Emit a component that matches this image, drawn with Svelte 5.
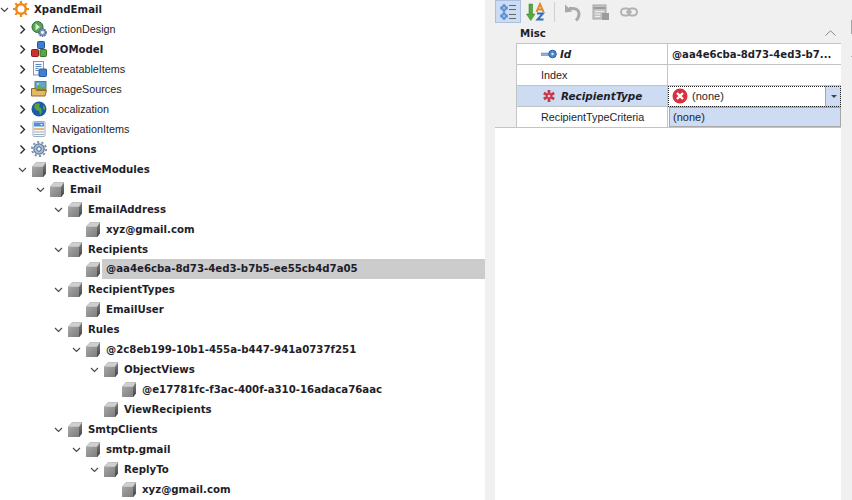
<script lang="ts">
  type Node = { level: number; label: string; icon: string; bold?: boolean; open?: boolean; leaf?: boolean; selected?: boolean };

  const nodes: Node[] = [
    { level: 0, label: "XpandEmail", icon: "sun", bold: true, open: true },
    { level: 1, label: "ActionDesign", icon: "action" },
    { level: 1, label: "BOModel", icon: "bo", bold: true },
    { level: 1, label: "CreatableItems", icon: "create" },
    { level: 1, label: "ImageSources", icon: "image" },
    { level: 1, label: "Localization", icon: "globe" },
    { level: 1, label: "NavigationItems", icon: "nav" },
    { level: 1, label: "Options", icon: "gear", bold: true },
    { level: 1, label: "ReactiveModules", icon: "cube", bold: true, open: true },
    { level: 2, label: "Email", icon: "cube", bold: true, open: true },
    { level: 3, label: "EmailAddress", icon: "cube", bold: true, open: true },
    { level: 4, label: "xyz@gmail.com", icon: "cube", bold: true, leaf: true },
    { level: 3, label: "Recipients", icon: "cube", bold: true, open: true },
    { level: 4, label: "@aa4e6cba-8d73-4ed3-b7b5-ee55cb4d7a05", icon: "cube", bold: true, leaf: true, selected: true },
    { level: 3, label: "RecipientTypes", icon: "cube", bold: true, open: true },
    { level: 4, label: "EmailUser", icon: "cube", bold: true, leaf: true },
    { level: 3, label: "Rules", icon: "cube", bold: true, open: true },
    { level: 4, label: "@2c8eb199-10b1-455a-b447-941a0737f251", icon: "cube", bold: true, open: true },
    { level: 5, label: "ObjectViews", icon: "cube", bold: true, open: true },
    { level: 6, label: "@e17781fc-f3ac-400f-a310-16adaca76aac", icon: "cube", bold: true, leaf: true },
    { level: 5, label: "ViewRecipients", icon: "cube", bold: true, leaf: true },
    { level: 3, label: "SmtpClients", icon: "cube", bold: true, open: true },
    { level: 4, label: "smtp.gmail", icon: "cube", bold: true, open: true },
    { level: 5, label: "ReplyTo", icon: "cube", bold: true, open: true },
    { level: 6, label: "xyz@gmail.com", icon: "cube", bold: true, leaf: true }
  ];
</script>

{#snippet treeIcon(name: string)}
  <svg class="icon" viewBox="0 0 16 16" width="16" height="16">
    {#if name === "sun"}
      <circle cx="8" cy="8" r="4.800" fill="none" stroke="#ee8a1c" stroke-width="2.600" />
      <path d="M8 0v3M8 13v3M0 8h3M13 8h3M2.300 2.300l2.200 2.200M11.500 11.500l2.200 2.200M2.300 13.700l2.200-2.200M11.500 4.500l2.200-2.200" stroke="#ee8a1c" stroke-width="2.200" />
    {:else if name === "action"}
      <circle cx="6.500" cy="6" r="5.500" fill="#5aa554" stroke="#2f6b35" />
      <path d="M4.500 2.500v7l4.500-3.500z" fill="#d8f0d0" />
      <circle cx="11.500" cy="11.500" r="3.600" fill="#7f9cc0" stroke="#56708f" stroke-width="1.600" stroke-dasharray="1.600 .7" />
      <circle cx="11.500" cy="11.500" r="1.400" fill="#fff" />
    {:else if name === "bo"}
      <rect x="6.500" y="0.500" width="7" height="7" rx="1" fill="#3f7fd0" stroke="#24528f" />
      <rect x="0.500" y="8.500" width="7" height="7" rx="1" fill="#c8322f" stroke="#842020" />
      <rect x="9" y="8.500" width="6.500" height="7" rx="1" fill="#58a83f" stroke="#3a7528" />
    {:else if name === "create"}
      <rect x="2.500" y="0.500" width="10" height="13.500" fill="#f4f8fd" stroke="#7d9cc4" />
      <path d="M4.500 3.500h6M4.500 5.500h6M4.500 7.500h3M4.500 9.500h3" stroke="#5f86bb" />
      <rect x="8" y="8" width="7.500" height="7.500" rx="1" fill="#3f80d0" stroke="#2a5a9c" />
    {:else if name === "image"}
      <rect x="4" y="0.500" width="11" height="8" fill="#5fa5d8" stroke="#6e7f60" />
      <path d="M5 8l3-4 3 3 2-2 2 3z" fill="#6ea83f" />
      <circle cx="7" cy="3" r="1" fill="#f4e27a" />
      <path d="M0.500 7.500h4l1 2h10l-1.500 5.500h-13.500z" fill="#e3b866" stroke="#94692b" />
    {:else if name === "globe"}
      <circle cx="8" cy="8" r="7.500" fill="#1e5aa8" />
      <path d="M4 3c2-1 4-1 5 0l-1 3 2 1 1 4-2 3-1-4-3-1-2-3z" fill="#5aa33c" />
      <path d="M12 4l2 2v3l-2-1z" fill="#5aa33c" />
    {:else if name === "nav"}
      <rect x="2" y="0.500" width="12" height="15" rx="1" fill="#f3f6fb" stroke="#9fb0c6" />
      <rect x="3" y="1.500" width="10" height="4" fill="#4e8fd6" />
      <path d="M9 3h3l-1.500 1.500z" fill="#fff" />
      <path d="M3 8h10" stroke="#e7a24a" stroke-width="1.500" />
      <path d="M3 11h10M3 13.500h10" stroke="#a4afbd" />
    {:else if name === "gear"}
      <circle cx="8" cy="8" r="5.200" fill="#aac0da" stroke="#5f7792" stroke-width="1.200" />
      <circle cx="8" cy="8" r="7" fill="none" stroke="#7f94ad" stroke-width="2" stroke-dasharray="2.200 2.200" />
      <circle cx="8" cy="8" r="2.200" fill="#fff" stroke="#3f5f88" />
    {:else}
      <defs>
        <linearGradient id="cube-front" x1="0" y1="0" x2="1" y2="1">
          <stop offset="0" stop-color="#a6a6a6" />
          <stop offset="1" stop-color="#7c7c7c" />
        </linearGradient>
        <linearGradient id="cube-side" x1="0" y1="0" x2="0" y2="1">
          <stop offset="0" stop-color="#7c7c7c" />
          <stop offset="1" stop-color="#444" />
        </linearGradient>
      </defs>
      <path d="M1 6 5 1.500h10L12 6z" fill="#cfcfcf" stroke="#9a9a9a" stroke-width=".5" />
      <path d="M12 6 15 1.500V12.500L12 16.500z" fill="url(#cube-side)" />
      <rect x="1" y="6" width="11" height="10.500" fill="url(#cube-front)" />
    {/if}
  </svg>
{/snippet}

<div class="screen">
  <section class="tree">
    {#each nodes as node}
      <div class="row" style="padding-left: {node.level * 18}px">
        <span class="toggle">
          {#if !node.leaf}
            <svg viewBox="0 0 9 9" width="9" height="9">
              {#if node.open}
                <path d="M1 3l3.500 3.500L8 3" fill="none" stroke="#4a4a4a" stroke-width="1.200" />
              {:else}
                <path d="M2.500 .5l4 4-4 4" fill="none" stroke="#222" stroke-width="1.300" />
              {/if}
            </svg>
          {/if}
        </span>
        {@render treeIcon(node.icon)}
        <span class="label" class:bold={node.bold} class:selected={node.selected}>{node.label}</span>
        {#if node.selected}
          <span class="selected-fill"></span>
        {/if}
      </div>
    {/each}
  </section>

  <section class="props">
    <span class="scroll-mark"></span>
    <span class="scroll-tick"></span>
    <div class="toolbar">
      <button class="tool active" aria-label="Categorized">
        <svg viewBox="0 0 20 20" width="20" height="20">
          <path d="M2.500 6h7M6 2.500v7M2.500 14h7M6 10.500v7" stroke="#2f6fc0" stroke-width="2.800" />
          <path d="M3.500 6h5M6 3.500v5M3.500 14h5M6 11.500v5" stroke="#bcd6f2" stroke-width=".9" />
          <path d="M11 3.500h7M11 7.500h7M11 12.500h7M11 16.500h7" stroke="#666" stroke-width="1.200" />
        </svg>
      </button>
      <button class="tool" aria-label="Alphabetical">
        <svg viewBox="0 0 20 20" width="20" height="20">
          <path d="M3 2h3.500v10H9l-4.250 6.500L.5 12H3z" fill="#58a83f" stroke="#3a8a2e" stroke-width=".6" />
          <path d="M10.500 10l3.500-8 3.500 8M11.500 7.500h5" stroke="#e08a2c" stroke-width="1.900" fill="none" />
          <path d="M11 11.500h6l-5.500 6h6" stroke="#2f6fc0" stroke-width="1.900" fill="none" />
        </svg>
      </button>
      <span class="sep"></span>
      <button class="tool" aria-label="Undo">
        <svg viewBox="0 0 20 20" width="20" height="20">
          <path d="M2 2.500v8l7.500-1z" fill="#a9a9a9" />
          <path d="M6 6.500h4c4 0 6 2.500 6 5.500 0 3-1.500 5-3 6.500" fill="none" stroke="#a9a9a9" stroke-width="3" />
        </svg>
      </button>
      <button class="tool" aria-label="Description">
        <svg viewBox="0 0 20 20" width="20" height="20">
          <rect x="2" y="3" width="13" height="14" fill="#c4c4c4" stroke="#a8a8a8" />
          <path d="M2.500 6h12" stroke="#9a9a9a" stroke-width="2" />
          <path d="M4 9.500h9M4 12h5M4 14.500h5" stroke="#eee" />
          <rect x="11" y="11" width="7" height="7" fill="#9c9c9c" />
        </svg>
      </button>
      <button class="tool" aria-label="Link">
        <svg viewBox="0 0 20 20" width="20" height="20">
          <rect x="2" y="6.500" width="9" height="7" rx="3.500" fill="none" stroke="#b2b2b2" stroke-width="2" />
          <rect x="9" y="6.500" width="9" height="7" rx="3.500" fill="none" stroke="#b2b2b2" stroke-width="2" />
          <path d="M7 10h6" stroke="#b2b2b2" stroke-width="1.500" />
        </svg>
      </button>
    </div>

    <div class="category">
      <span>Misc</span>
      <svg viewBox="0 0 11 6" width="11" height="6"><path d="M.5 5.500 5.500 .8l5 4.700" fill="none" stroke="#888" /></svg>
    </div>

    <div class="grid">
      <div class="name inset">
        <svg class="prop-icon" viewBox="0 0 16 10" width="16" height="10">
          <path d="M0 4h10v2.500H0z" fill="#8fb0d6" stroke="#6c8db4" stroke-width=".6" />
          <circle cx="11.500" cy="5" r="3.800" fill="#4a87cc" stroke="#2e5f9c" />
          <circle cx="11.500" cy="5" r="1.200" fill="#d8e8f8" />
        </svg>
        <b><i>Id</i></b>
      </div>
      <div class="value strong">@aa4e6cba-8d73-4ed3-b7...</div>

      <div class="name">Index</div>
      <div class="value"></div>

      <div class="name inset current">
        <svg class="prop-icon asterisk" viewBox="0 0 12 12" width="12" height="12">
          <path d="M6 0v12M.8 3l10.400 6M.8 9l10.400-6" stroke="#c9384a" stroke-width="2.800" />
          <circle cx="6" cy="6" r="1.300" fill="#f6d5d8" />
        </svg>
        <b><i>RecipientType</i></b>
      </div>
      <div class="value editor">
        <svg viewBox="0 0 16 16" width="16" height="16">
          <circle cx="8" cy="8" r="7.500" fill="#d9303f" />
          <path d="M5 5l6 6M11 5l-6 6" stroke="#fff" stroke-width="2.400" />
        </svg>
        <span class="editor-text">(none)</span>
        <span class="arrow"><i></i></span>
        <div class="dropdown">(none)</div>
      </div>

      <div class="name">RecipientTypeCriteria</div>
      <div class="value"></div>
    </div>

    <div class="empty"></div>
  </section>
</div>

<style>
  :global(body) {
    margin: 0;
    background: #fff;
  }
  .screen {
    display: flex;
    width: 852px;
    height: 500px;
    overflow: hidden;
    font-family: "Liberation Sans", Arial, sans-serif;
    font-size: 11px;
    color: #1e1e2a;
  }
  .tree {
    width: 485px;
    flex: none;
    background: #fff;
    overflow: hidden;
    margin-top: -1px;
  }
  .row {
    display: flex;
    align-items: center;
    height: 20px;
  }
  .toggle {
    width: 13px;
    display: flex;
    flex: none;
  }
  .icon {
    flex: none;
  }
  .label {
    margin-left: 5px;
    font-size: 10.8px;
    white-space: nowrap;
  }
  .label.bold {
    font-family: "DejaVu Sans", sans-serif;
    font-weight: 700;
    font-size: 10.2px;
  }
  .selected-fill {
    flex: 1;
    align-self: stretch;
    background: #ccc;
  }
  .label.selected {
    background: #ccc;
    align-self: stretch;
    line-height: 20px;
    margin-left: 1px;
    padding-left: 4px;
  }
  .props {
    position: relative;
    flex: 1;
    display: flex;
    flex-direction: column;
    background: #f0f0f0;
    padding: 0 11px 0 10px;
  }
  .scroll-mark {
    position: absolute;
    right: 0;
    top: 20px;
    width: 1px;
    height: 14px;
    background: #a4a4a4;
  }
  .scroll-tick {
    position: absolute;
    right: 0;
    top: 56px;
    width: 1px;
    height: 1px;
    background: #a4a4a4;
  }
  .toolbar {
    display: flex;
    align-items: center;
    gap: 2px;
    height: 23px;
    flex: none;
  }
  .tool {
    width: 26px;
    height: 23px;
    padding: 0;
    border: 1px solid transparent;
    background: none;
    display: flex;
    align-items: center;
    justify-content: center;
  }
  .tool.active {
    background: #cddcf3;
    border-color: #a9c0e0;
  }
  .sep {
    width: 1px;
    height: 20px;
    background: #d0d0d0;
    margin: 0 3px;
  }
  .category {
    display: flex;
    align-items: center;
    justify-content: space-between;
    height: 20px;
    margin-left: 25px;
    padding-right: 5px;
    font-family: "DejaVu Sans", sans-serif;
    font-weight: 700;
    font-size: 10.2px;
  }
  .grid {
    display: grid;
    grid-template-columns: 151px 1fr;
    grid-auto-rows: 21px;
    margin-left: 21px;
    border-top: 1px solid #c4c4c4;
    border-left: 1px solid #c4c4c4;
    background: #fff;
    flex: none;
  }
  .name,
  .value {
    display: flex;
    align-items: center;
    box-sizing: border-box;
    border-bottom: 1px solid #c4c4c4;
    background: #fff;
    min-width: 0;
    white-space: nowrap;
  }
  .name {
    padding-left: 24px;
    border-right: 1px solid #c4c4c4;
    font-size: 10.8px;
  }
  .name b {
    font-family: "DejaVu Sans", sans-serif;
    font-size: 10.4px;
  }
  .name.inset {
    gap: 3px;
  }
  .prop-icon {
    flex: none;
  }
  .asterisk {
    margin-left: 2px;
    margin-right: 3px;
  }
  .name.current {
    background: #cddcf3;
  }
  .value {
    padding-left: 4px;
  }
  .value.strong {
    font-family: "DejaVu Sans", sans-serif;
    font-weight: 700;
    font-size: 10.1px;
  }
  .value.editor {
    position: relative;
    outline: 1px dotted #222;
    outline-offset: -1px;
  }
  .editor-text {
    margin-left: 4px;
    flex: 1;
    font-size: 11px;
  }
  .arrow {
    align-self: stretch;
    width: 15px;
    background: #cddcf3;
    border-left: 1px solid #9aa8bc;
    display: flex;
    align-items: center;
    justify-content: center;
  }
  .arrow i {
    border-left: 3px solid transparent;
    border-right: 3px solid transparent;
    border-top: 3px solid #444;
  }
  .dropdown {
    position: absolute;
    left: 1px;
    right: 0;
    top: 21px;
    height: 20px;
    box-sizing: border-box;
    background: #cddcf3;
    border: 1px solid #a8a8a8;
    line-height: 18px;
    padding-left: 3px;
    z-index: 2;
  }
  .empty {
    flex: 1;
    background: #fff;
    border-top: 1px solid #c4c4c4;
    margin-top: -1px;
  }
</style>
